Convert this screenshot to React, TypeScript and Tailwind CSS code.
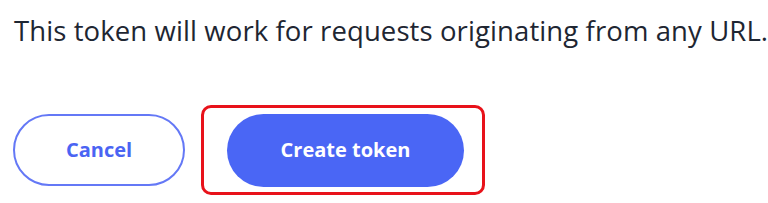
export default function App() {
  return (
    <div className="w-[768px] h-[203px] bg-white font-['Open_Sans',sans-serif] overflow-hidden">
      <p className="pl-[14px] pt-[15px] text-[27.5px] leading-[32px] tracking-[0.1px] text-[#1e2632] whitespace-nowrap">
        This token will work for requests originating from any URL.
      </p>
      <div className="mt-[58px] flex items-center pl-[13px]">
        <button
          type="button"
          className="w-[172px] h-[72px] rounded-full border-2 border-[#6478f6] text-[20px] font-bold text-[#4a64f3]"
        >
          Cancel
        </button>
        <div className="ml-[16px] w-[284px] h-[90px] rounded-[10px] border-[3px] border-[#e8121a] flex items-center pl-[23px]">
          <button
            type="button"
            className="w-[237px] h-[73px] rounded-full bg-[#4a66f5] text-[20px] font-bold text-white"
          >
            Create token
          </button>
        </div>
      </div>
    </div>
  );
}
